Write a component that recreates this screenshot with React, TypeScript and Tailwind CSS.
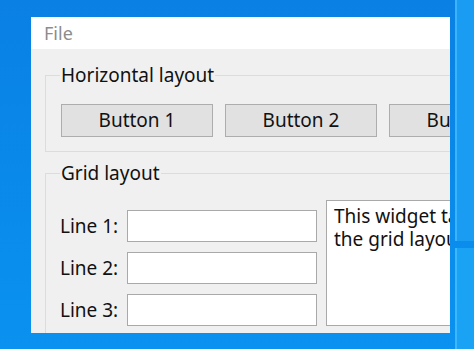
export default function App() {
  const font = { fontFamily: '"Noto Sans", "Liberation Sans", sans-serif' }
  return (
    <div
      className="relative w-[474px] h-[349px] overflow-hidden bg-gradient-to-b from-[#0a80e4] to-[#0a92f0] pl-[31px] pt-[17px]"
      style={font}
    >
      {/* windows logo panels on the desktop */}
      <div className="absolute left-[455px] top-[0px] w-[30px] h-[241px] bg-[#1a9cf2] border-l-2 border-[#3bb4ff]" />
      <div className="absolute left-[455px] top-[248px] w-[30px] h-[110px] bg-[#1aa2f4] border-l-2 border-[#3bb8ff]" />

      <div className="relative w-[419px] h-[316px] overflow-hidden bg-[#f0f0f0] flex flex-col">
        <div className="h-[32px] bg-white flex items-center pl-[13px] text-[18px] text-[#8c8c8c] shrink-0">
          File
        </div>

        <div className="pl-[14px] pt-[17px] flex flex-col gap-[12px]">
          <fieldset className="w-[430px] h-[86px] border border-[#dcdcdc] pl-[14px] m-0 p-0">
            <legend className="px-[1px] text-[19px] leading-[18px] text-[#111]">Horizontal layout</legend>
            <div className="flex gap-[12px] mt-[20px] pl-[1px]">
              {["Button 1", "Button 2", "Button 3"].map((b) => (
                <div
                  key={b}
                  className="w-[152px] h-[33px] shrink-0 bg-[#e1e1e1] border border-[#adadad] flex items-center justify-center text-[19px] text-[#111] whitespace-nowrap"
                >
                  {b}
                </div>
              ))}
            </div>
          </fieldset>

          <fieldset className="w-[430px] h-[200px] border border-[#dcdcdc] pl-[14px] m-0 p-0">
            <legend className="px-[1px] text-[19px] leading-[18px] text-[#111]">Grid layout</legend>
            <div className="flex gap-[9px] mt-[18px]">
              <div className="flex flex-col gap-[10px] pt-[10px]">
                {["Line 1:", "Line 2:", "Line 3:"].map((l) => (
                  <div key={l} className="flex items-center gap-[9px] h-[32px]">
                    <span className="w-[58px] text-[19px] text-[#111] whitespace-nowrap">{l}</span>
                    <div className="w-[190px] h-[32px] bg-white border border-[#a9a9a9]" />
                  </div>
                ))}
              </div>
              <div className="w-[160px] h-[126px] shrink-0 bg-white border border-[#a9a9a9] px-[7px] pt-[4px] text-[19px] leading-[23px] text-[#111] whitespace-nowrap">
                This widget takes up all space in
                <br />
                the grid layout
              </div>
            </div>
          </fieldset>
        </div>
      </div>
    </div>
  )
}
